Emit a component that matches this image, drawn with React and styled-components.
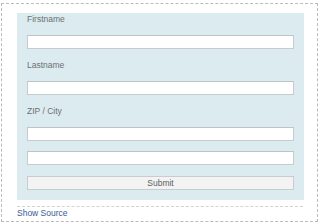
import React from "react";
import styled, { createGlobalStyle } from "styled-components";

const Global = createGlobalStyle`
  html, body { margin: 0; padding: 0; background: #fff; }
  body { font-family: "Liberation Sans", Arial, sans-serif; }
`;

const Frame = styled.div`
  box-sizing: border-box;
  margin: 3px 0 0 1px;
  width: 317px;
  height: 219px;
  border: 1px dashed #b8bcbe;
  padding: 9px 13px 0 15px;
  display: flex;
  flex-direction: column;
`;

const Panel = styled.form`
  box-sizing: border-box;
  background: #dcebef;
  padding: 1px 10px 10px 10px;
  display: flex;
  flex-direction: column;
`;

const Label = styled.label`
  font-size: 8.5px;
  line-height: 10px;
  height: 10px;
  color: #6b7073;
  margin-bottom: 11px;
`;

const Input = styled.input`
  box-sizing: border-box;
  height: 14px;
  width: 100%;
  margin: 0 0 ${(p) => p.$gap}px 0;
  border: 1px solid #c8cccd;
  border-top-color: #bfc3c5;
  background: #fff;
  padding: 0;
  outline: none;
`;

const Button = styled.button`
  box-sizing: border-box;
  height: 14px;
  width: 100%;
  margin: 0;
  padding: 0;
  border: 1px solid #c8cccd;
  background: #f3f3f3;
  font-family: "Liberation Sans", Arial, sans-serif;
  font-size: 8.5px;
  line-height: 12px;
  color: #5a5f63;
`;

const Footer = styled.div`
  margin-top: 6px;
  border-top: 1px dashed #cfd3d5;
  padding-top: 1px;
  width: 286px;
  font-size: 8.5px;
  line-height: 10px;
`;

const Link = styled.a`
  font-size: 8.5px;
  line-height: 10px;
  color: #3a5a94;
  text-decoration: none;
`;

export default function App() {
  return (
    <>
      <Global />
      <Frame>
        <Panel onSubmit={(e) => e.preventDefault()}>
          <Label>Firstname</Label>
          <Input $gap={11} />
          <Label>Lastname</Label>
          <Input $gap={11} />
          <Label>ZIP / City</Label>
          <Input $gap={10} />
          <Input $gap={11} />
          <Button type="submit">Submit</Button>
        </Panel>
        <Footer>
          <Link href="#">Show Source</Link>
        </Footer>
      </Frame>
    </>
  );
}
